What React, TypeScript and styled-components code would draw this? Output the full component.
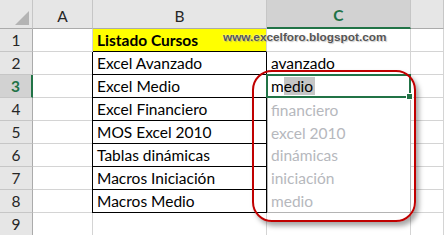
import styled, { createGlobalStyle } from "styled-components";

const GlobalStyle = createGlobalStyle`
  html, body {
    margin: 0;
    padding: 0;
    background: #ffffff;
    overflow: hidden;
  }
`;

const GREEN = "#217346";
const GRID = "#d4d4d4";

type Row = { b?: string; c?: string };

const rows: Row[] = [
  { b: "Listado Cursos" },
  { b: "Excel Avanzado", c: "avanzado" },
  { b: "Excel Medio" },
  { b: "Excel Financiero" },
  { b: "MOS Excel 2010" },
  { b: "Tablas dinámicas" },
  { b: "Macros Iniciación" },
  { b: "Macros Medio" },
  { b: "" },
];

const suggestions = ["financiero", "excel 2010", "dinámicas", "iniciación", "medio"];

const App = () => {
  return (
    <>
      <GlobalStyle />
      <Sheet>
        <Corner>
          <CornerMark />
        </Corner>
        <ColHeader>A</ColHeader>
        <ColHeader>B</ColHeader>
        <ColHeader $active>C</ColHeader>
        <ColHeader />

        {rows.map((row, i) => {
          const n = i + 1;
          const boxed = n >= 2 && n <= 8;
          const inList = n >= 4 && n <= 8;
          return [
            <RowHeader key={`h${n}`} $active={n === 3}>
              {n}
            </RowHeader>,
            <Cell key={`a${n}`} />,
            <Cell
              key={`b${n}`}
              $fill={n === 1 ? "#ffff00" : undefined}
              $bold={n === 1}
              $boxed={boxed}
              $blackBottom={n === 1}
            >
              {row.b}
            </Cell>,
            n === 3 ? (
              <Cell key="c3" $selected>
                m<Autofill>edio</Autofill>
                <FillHandle />
              </Cell>
            ) : inList ? null : (
              <Cell key={`c${n}`}>{row.c}</Cell>
            ),
            <Cell key={`d${n}`} />,
          ];
        })}

        <SuggestList>
          {suggestions.map((s) => (
            <SuggestItem key={s}>{s}</SuggestItem>
          ))}
        </SuggestList>

        <UrlLabel>www.excelforo.blogspot.com</UrlLabel>
        <Highlight />
      </Sheet>
    </>
  );
};

export default App;

const Sheet = styled.div`
  position: relative;
  display: grid;
  grid-template-columns: 33px 60px 174px 144px 33px;
  grid-template-rows: 29px repeat(9, 23px);
  width: 444px;
  height: 235px;
  overflow: hidden;
  font-family: Lato, "Liberation Sans", sans-serif;
  font-size: 15.5px;
  color: #000;
`;

const Corner = styled.div`
  position: relative;
  background: #e6e6e6;
  border-right: 1px solid #c6c6c6;
  border-bottom: 1px solid #ababab;
  box-sizing: border-box;
`;

const CornerMark = styled.div`
  position: absolute;
  right: 3px;
  bottom: 3px;
  width: 0;
  height: 0;
  border-left: 14px solid transparent;
  border-bottom: 14px solid #b4b4b4;
`;

const ColHeader = styled.div<{ $active?: boolean }>`
  display: flex;
  align-items: flex-end;
  justify-content: center;
  box-sizing: border-box;
  padding-bottom: 3px;
  line-height: 18px;
  background: ${(p) => (p.$active ? "#d2d2d2" : "#e6e6e6")};
  color: ${(p) => (p.$active ? GREEN : "#262626")};
  font-weight: ${(p) => (p.$active ? 700 : 400)};
  border-right: 1px solid #c6c6c6;
  border-bottom: ${(p) => (p.$active ? `2px solid ${GREEN}` : "1px solid #ababab")};
`;

const RowHeader = styled.div<{ $active?: boolean }>`
  display: flex;
  align-items: flex-end;
  justify-content: center;
  box-sizing: border-box;
  padding-bottom: 2px;
  line-height: 18px;
  background: ${(p) => (p.$active ? "#d2d2d2" : "#e6e6e6")};
  color: ${(p) => (p.$active ? GREEN : "#262626")};
  font-weight: ${(p) => (p.$active ? 700 : 400)};
  border-bottom: 1px solid #c6c6c6;
  border-right: ${(p) => (p.$active ? `2px solid ${GREEN}` : "1px solid #ababab")};
`;

const Cell = styled.div<{
  $fill?: string;
  $bold?: boolean;
  $boxed?: boolean;
  $blackBottom?: boolean;
  $selected?: boolean;
}>`
  position: relative;
  display: flex;
  align-items: flex-end;
  box-sizing: border-box;
  padding: 0 0 2px 4px;
  line-height: 18px;
  white-space: nowrap;
  background: ${(p) => p.$fill ?? "#fff"};
  font-weight: ${(p) => (p.$bold ? 700 : 400)};
  border-right: 1px solid ${(p) => (p.$boxed ? "#000" : GRID)};
  border-bottom: 1px solid ${(p) => (p.$boxed || p.$blackBottom ? "#000" : GRID)};
  ${(p) =>
    p.$boxed &&
    `
    margin-left: -1px;
    border-left: 1px solid #000;
  `}
  ${(p) =>
    p.$selected &&
    `
    &::after {
      content: "";
      position: absolute;
      inset: -1px;
      border: 2px solid ${GREEN};
      pointer-events: none;
    }
  `}
`;

const Autofill = styled.span`
  background: #c6c6c6;
  padding-right: 2px;
`;

const FillHandle = styled.span`
  position: absolute;
  right: -3px;
  bottom: -3px;
  width: 5px;
  height: 5px;
  background: ${GREEN};
  border: 1px solid #fff;
  z-index: 2;
`;

const SuggestList = styled.div`
  grid-column: 4;
  grid-row: 5 / 10;
  display: flex;
  flex-direction: column;
  background: #fff;
  border-left: 1px solid #b4b4b4;
  border-right: 1px solid #b4b4b4;
  border-bottom: 1px solid #b4b4b4;
  box-shadow: 2px 2px 4px rgba(0, 0, 0, 0.3);
  box-sizing: border-box;
`;

const SuggestItem = styled.div`
  flex: 1;
  display: flex;
  align-items: flex-end;
  padding: 0 0 2px 3px;
  line-height: 18px;
  color: #b6b8bd;
`;

const UrlLabel = styled.div`
  position: absolute;
  left: 223px;
  top: 30px;
  font-family: "Liberation Sans", Arial, sans-serif;
  font-weight: 700;
  font-size: 11.8px;
  color: #555;
  text-shadow: 0 0 2px #fff, 1px 1px 1px rgba(0, 0, 0, 0.25);
`;

const Highlight = styled.div`
  position: absolute;
  left: 252px;
  top: 70px;
  width: 164px;
  height: 152px;
  box-sizing: border-box;
  border: 2.5px solid #c00000;
  border-radius: 20px;
  box-shadow: 3px 4px 5px rgba(0, 0, 0, 0.35);
  pointer-events: none;
  z-index: 3;
`;
